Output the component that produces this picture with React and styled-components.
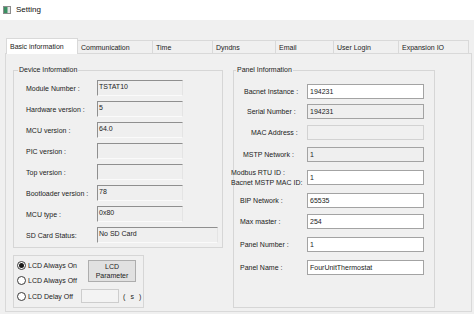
import React from 'react';
import styled, { createGlobalStyle } from 'styled-components';

const GlobalStyle = createGlobalStyle`
  html, body { margin: 0; padding: 0; background: #f0f0f0; }
  body { font-family: "Liberation Sans", Arial, sans-serif; }
  * { box-sizing: border-box; }
`;

const Window = styled.div`
  width: 474px;
  height: 314px;
  background: #f0f0f0;
  overflow: hidden;
  display: flex;
  flex-direction: column;
  font-family: "Liberation Sans", Arial, sans-serif;
  font-size: 7px;
  color: #1e1e1e;
`;

const TitleBar = styled.div`
  height: 20px;
  flex: none;
  background: #ffffff;
  display: flex;
  align-items: center;
  gap: 5px;
  padding: 0 0 1px 3px;
  font-size: 8px;
  color: #111;
`;

const Body = styled.div`
  flex: 1;
  display: flex;
  flex-direction: column;
  padding: 18px 2px 2px 5px;
`;

const TabBar = styled.div`
  display: flex;
  align-items: flex-end;
  height: 15px;
  padding-left: 1px;
`;

const Tab = styled.div`
  width: ${(p) => p.$w}px;
  height: ${(p) => (p.$active ? 16 : 13)}px;
  margin-bottom: ${(p) => (p.$active ? -1 : 0)}px;
  position: relative;
  z-index: ${(p) => (p.$active ? 1 : 0)};
  background: ${(p) => (p.$active ? '#ffffff' : '#f0f0f0')};
  border-top: 1px solid #d9d9d9;
  border-right: 1px solid #d9d9d9;
  border-left: ${(p) => (p.$first ? '1px solid #d9d9d9' : 'none')};
  display: flex;
  align-items: center;
  padding: 0 0 ${(p) => (p.$active ? 1 : 0)}px 3px;
  white-space: nowrap;
  color: #222;
`;

const Page = styled.div`
  flex: 1;
  border: 1px solid #d9d9d9;
  display: flex;
  align-items: stretch;
  gap: 10px;
  padding: 12px 0 3px 7px;
`;

const LeftCol = styled.div`
  width: 210px;
  display: flex;
  flex-direction: column;
  gap: 7px;
`;

const GroupBox = styled.fieldset`
  margin: 0;
  min-width: 0;
  border: 1px solid #d6d6d6;
  width: ${(p) => p.$w}px;
  padding: ${(p) => p.$pad};
  display: flex;
  flex-direction: column;
`;

const Legend = styled.legend`
  padding: 0 1px;
  margin: 0;
  font-size: 7px;
  line-height: 8px;
  color: #222;
`;

const DeviceRows = styled.div`
  display: flex;
  flex-direction: column;
  gap: 5px;
  padding-left: 8px;
`;

const Row = styled.div`
  display: flex;
  align-items: center;
  height: ${(p) => p.$h}px;
  margin-top: ${(p) => p.$mt || 0}px;
`;

const DeviceLabel = styled.div`
  width: 71px;
  white-space: nowrap;
  color: #222;
`;

const StaticField = styled.div`
  width: ${(p) => (p.$wide ? 121 : 86)}px;
  height: 16px;
  background: #efefef;
  border-top: 1px solid #8f8f8f;
  border-left: 1px solid #8f8f8f;
  border-right: 1px solid #e4e4e4;
  border-bottom: 1px solid #fafafa;
  padding: 2px 0 0 1px;
  line-height: 8px;
  color: #222;
  white-space: nowrap;
`;

const LcdBox = styled.div`
  height: 53px;
  border: 1px solid #d6d6d6;
  width: 131px;
  padding: 2px 0 2px 3px;
  display: grid;
  grid-template-columns: 64px auto;
  grid-template-rows: 15px 15px 16px;
`;

const RadioItem = styled.label`
  grid-column: 1;
  display: flex;
  align-items: center;
  gap: 2px;
  white-space: nowrap;
  color: #222;
`;

const RadioCircle = styled.span`
  width: 9px;
  height: 9px;
  border-radius: 50%;
  border: 1px solid #3a3a3a;
  background: #fff;
  display: grid;
  place-items: center;
  &::after {
    content: '';
    width: 5px;
    height: 5px;
    border-radius: 50%;
    background: ${(p) => (p.$checked ? '#1a1a1a' : 'transparent')};
  }
`;

const ParamButton = styled.button`
  grid-column: 2;
  grid-row: 1 / span 2;
  align-self: start;
  justify-self: start;
  margin: 2px 0 0 7px;
  width: 48px;
  height: 22px;
  padding: 0;
  background: #e1e1e1;
  border: 1px solid #adadad;
  font-family: inherit;
  font-size: 7px;
  line-height: 9px;
  color: #222;
  text-align: center;
`;

const DelayRow = styled.div`
  grid-column: 2;
  grid-row: 3;
  display: flex;
  align-items: center;
  gap: 4px;
`;

const DelayInput = styled.div`
  width: 38px;
  height: 14px;
  background: #f3f3f3;
  border: 1px solid #cdcdcd;
`;

const Unit = styled.span`
  word-spacing: 2px;
  letter-spacing: 0.6px;
  color: #222;
`;

const PanelLabel = styled.div`
  width: 71px;
  padding-left: ${(p) => Math.max(p.$indent, 0)}px;
  margin-left: ${(p) => Math.min(p.$indent, 0)}px;
  margin-right: ${(p) => -Math.min(p.$indent, 0)}px;
  line-height: 10px;
  white-space: nowrap;
  color: #222;
`;

const fieldLook = {
  edit: { bg: '#ffffff', border: '#a3a3a3' },
  readonly: { bg: '#efefef', border: '#a3a3a3' },
  disabled: { bg: '#f0f0f0', border: '#d2d2d2' },
};

const PanelField = styled.div`
  width: 117px;
  height: 15px;
  background: ${(p) => fieldLook[p.$kind].bg};
  border: 1px solid ${(p) => fieldLook[p.$kind].border};
  padding-left: 2px;
  line-height: 13px;
  color: #222;
  white-space: nowrap;
`;

const tabs = [
  { name: 'Basic information', w: 72 },
  { name: 'Communication', w: 75 },
  { name: 'Time', w: 60 },
  { name: 'Dyndns', w: 63 },
  { name: 'Email', w: 58 },
  { name: 'User Login', w: 65 },
  { name: 'Expansion IO', w: 70 },
];

const deviceRows = [
  { label: 'Module Number :', value: 'TSTAT10' },
  { label: 'Hardware version :', value: '5' },
  { label: 'MCU version :', value: '64.0' },
  { label: 'PIC version :', value: '' },
  { label: 'Top version :', value: '' },
  { label: 'Bootloader version :', value: '78' },
  { label: 'MCU type :', value: '0x80' },
  { label: 'SD Card Status:', value: 'No SD Card', wide: true },
];

const panelRows = [
  { label: ['Bacnet Instance :'], value: '194231', kind: 'edit', indent: 8, mt: 0 },
  { label: ['Serial Number :'], value: '194231', kind: 'readonly', indent: 11, mt: 5 },
  { label: ['MAC Address :'], value: '', kind: 'disabled', indent: 15, mt: 6 },
  { label: ['MSTP Network :'], value: '1', kind: 'readonly', indent: 7, mt: 7 },
  { label: ['Modbus RTU ID :', 'Bacnet MSTP MAC ID:'], value: '1', kind: 'edit', indent: -5, mt: 8 },
  { label: ['BIP Network :'], value: '65535', kind: 'edit', indent: 4, mt: 8 },
  { label: ['Max master :'], value: '254', kind: 'edit', indent: 4, mt: 6 },
  { label: ['Panel Number :'], value: '1', kind: 'edit', indent: 4, mt: 8 },
  { label: ['Panel Name  :'], value: 'FourUnitThermostat', kind: 'edit', indent: 4, mt: 8 },
];

const AppIcon = () => (
  <svg width="8" height="8" viewBox="0 0 8 8">
    <rect x="0.5" y="0.5" width="7" height="7" fill="#e4e4e4" stroke="#8c8c8c" />
    <rect x="1" y="1" width="3.5" height="6" fill="#3b8f62" />
  </svg>
);

export default function App() {
  return (
    <Window>
      <GlobalStyle />
      <TitleBar>
        <AppIcon />
        <span>Setting</span>
      </TitleBar>
      <Body>
        <TabBar>
          {tabs.map((t, i) => (
            <Tab key={t.name} $w={t.w} $active={i === 0} $first={i === 0}>
              {t.name}
            </Tab>
          ))}
        </TabBar>
        <Page>
          <LeftCol>
            <GroupBox $w={210} $pad="6px 0 4px 4px">
              <Legend>Device Information</Legend>
              <DeviceRows>
                {deviceRows.map((r) => (
                  <Row key={r.label} $h={16}>
                    <DeviceLabel>{r.label}</DeviceLabel>
                    <StaticField $wide={r.wide}>{r.value}</StaticField>
                  </Row>
                ))}
              </DeviceRows>
            </GroupBox>
            <LcdBox>
              <RadioItem>
                <RadioCircle $checked />
                LCD Always On
              </RadioItem>
              <RadioItem>
                <RadioCircle />
                LCD Always Off
              </RadioItem>
              <RadioItem>
                <RadioCircle />
                LCD Delay Off
              </RadioItem>
              <ParamButton>
                LCD
                <br />
                Parameter
              </ParamButton>
              <DelayRow>
                <DelayInput />
                <Unit>( s )</Unit>
              </DelayRow>
            </LcdBox>
          </LeftCol>
          <GroupBox $w={202} $pad="10px 10px 0 2px">
            <Legend>Panel Information</Legend>
            {panelRows.map((r) => (
              <Row key={r.label[0]} $h={15} $mt={r.mt}>
                <PanelLabel $indent={r.indent}>
                  {r.label.map((l, i) => (
                    <div key={i}>{l}</div>
                  ))}
                </PanelLabel>
                <PanelField $kind={r.kind}>{r.value}</PanelField>
              </Row>
            ))}
          </GroupBox>
        </Page>
      </Body>
    </Window>
  );
}
